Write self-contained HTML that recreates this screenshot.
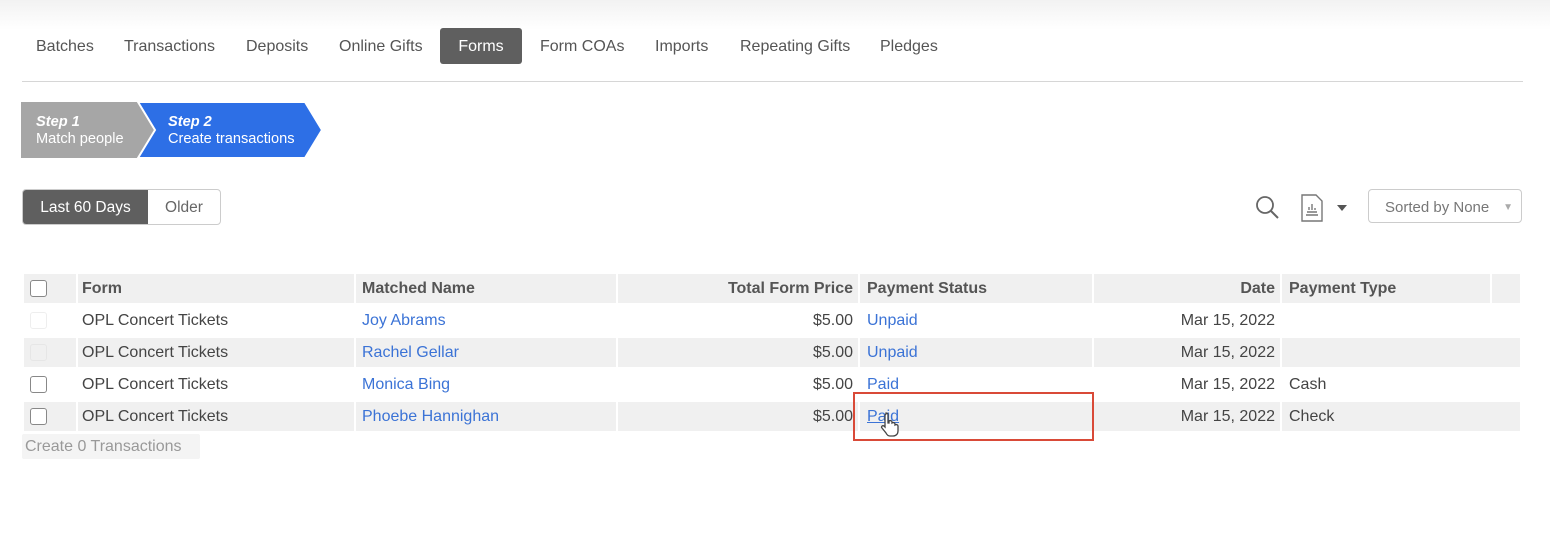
<!DOCTYPE html>
<html><head><style>
body{margin:0;width:1550px;height:540px;background:#fff;font-family:"Liberation Sans",sans-serif;color:#444;position:relative;overflow:hidden}
.top{position:absolute;left:0;top:0;width:1550px;height:30px;background:linear-gradient(#f2f2f2,#fff)}
.nav{position:absolute;top:28px;left:0;font-size:16px;color:#555}
.nav span{position:absolute;top:10px;white-space:nowrap}
.forms{position:absolute;left:440px;top:28px;width:82px;height:36px;background:#5f5f5f;border-radius:3px;color:#fff;font-size:16px;text-align:center;line-height:37px}
.hr{position:absolute;left:22px;top:81px;width:1501px;height:1px;background:#d6d6d6}
.step{position:absolute;color:#fff;font-size:14.6px;line-height:17px}
.abs{position:absolute}
.cell{position:absolute;background:#f0f0f0}
.t{position:absolute;font-size:16px;white-space:nowrap}
.b{font-weight:bold;color:#555}
.lk{color:#3b73d6}
.cb{position:absolute;width:15px;height:15px;border:1.5px solid #888;border-radius:3px;background:#fff}
</style></head><body>
<div class="top"></div>
<div class="nav">
<span style="left:36px">Batches</span><span style="left:124px">Transactions</span><span style="left:246px">Deposits</span><span style="left:339px">Online Gifts</span><span style="left:540px">Form COAs</span><span style="left:655px">Imports</span><span style="left:740px">Repeating Gifts</span><span style="left:880px">Pledges</span>
</div>
<div class="forms">Forms</div>
<div class="hr"></div>
<svg class="abs" style="left:21px;top:102px" width="305" height="57">
<polygon points="0,0 127,0 144,28 127,56 0,56" fill="#a6a6a6"/>
<polygon points="129,0 284,0 301,28 284,56 117,56 134,28 117,0" fill="#2d6fe6" stroke="#fff" stroke-width="2"/>
</svg>
<div class="step" style="left:36px;top:114px"><b><i>Step 1</i></b><br>Match people</div>
<div class="step" style="left:168px;top:114px"><b><i>Step 2</i></b><br>Create transactions</div>
<div class="abs" style="left:22px;top:189px;width:197px;height:34px;border:1px solid #ccc;border-radius:4px;overflow:hidden;font-size:15.5px">
<div class="abs" style="left:0;top:0;width:125px;height:34px;background:#5f5f5f;color:#fff;text-align:center;line-height:36px">Last 60 Days</div>
<div class="abs" style="left:125px;top:0;width:72px;height:34px;color:#666;text-align:center;line-height:36px">Older</div>
</div>
<svg class="abs" style="left:1255px;top:195px" width="26" height="26"><circle cx="10" cy="10" r="8" fill="none" stroke="#666" stroke-width="1.8"/><line x1="16" y1="16" x2="23" y2="23" stroke="#666" stroke-width="2"/></svg>
<svg class="abs" style="left:1300px;top:193px" width="50" height="30"><path d="M2 2h14l6 6v20h-20z" fill="none" stroke="#777" stroke-width="1.4"/><path d="M6 22h12M7 19h10M9 17v-3M12 17v-6M15 17v-2" stroke="#777" stroke-width="1.4"/><polygon points="37,12 47,12 42,18" fill="#555"/></svg>
<div class="abs" style="left:1368px;top:189px;width:154px;height:34px;border:1px solid #ccc;border-radius:4px;font-size:15px;color:#777;line-height:35px;padding-left:16px;box-sizing:border-box">Sorted by None<span style="position:absolute;right:8px;top:0;font-size:10px;color:#aaa">▼</span></div>

<div class="cell" style="left:24px;top:274px;width:52px;height:29px"></div>
<div class="cell" style="left:78px;top:274px;width:276px;height:29px"></div>
<div class="cell" style="left:356px;top:274px;width:260px;height:29px"></div>
<div class="cell" style="left:618px;top:274px;width:240px;height:29px"></div>
<div class="cell" style="left:860px;top:274px;width:232px;height:29px"></div>
<div class="cell" style="left:1094px;top:274px;width:186px;height:29px"></div>
<div class="cell" style="left:1282px;top:274px;width:208px;height:29px"></div>
<div class="cell" style="left:1492px;top:274px;width:28px;height:29px"></div>
<div class="cb" style="left:30px;top:280px"></div>
<div class="t b" style="left:82px;top:280px">Form</div>
<div class="t b" style="left:362px;top:280px">Matched Name</div>
<div class="t b" style="right:697px;top:280px">Total Form Price</div>
<div class="t b" style="left:867px;top:280px">Payment Status</div>
<div class="t b" style="right:275px;top:280px">Date</div>
<div class="t b" style="left:1289px;top:280px">Payment Type</div>

<div class="cell" style="left:24px;top:338px;width:52px;height:29px"></div><div class="cell" style="left:78px;top:338px;width:276px;height:29px"></div><div class="cell" style="left:356px;top:338px;width:260px;height:29px"></div><div class="cell" style="left:618px;top:338px;width:240px;height:29px"></div><div class="cell" style="left:860px;top:338px;width:232px;height:29px"></div><div class="cell" style="left:1094px;top:338px;width:186px;height:29px"></div><div class="cell" style="left:1282px;top:338px;width:238px;height:29px"></div>
<div class="cell" style="left:24px;top:402px;width:52px;height:29px"></div><div class="cell" style="left:78px;top:402px;width:276px;height:29px"></div><div class="cell" style="left:356px;top:402px;width:260px;height:29px"></div><div class="cell" style="left:618px;top:402px;width:240px;height:29px"></div><div class="cell" style="left:860px;top:402px;width:232px;height:29px"></div><div class="cell" style="left:1094px;top:402px;width:186px;height:29px"></div><div class="cell" style="left:1282px;top:402px;width:238px;height:29px"></div>

<div class="cb" style="left:30px;top:312px;border-color:#eee;background:transparent"></div>
<div class="cb" style="left:30px;top:344px;border-color:#e6e6e6;background:transparent"></div>
<div class="cb" style="left:30px;top:376px"></div>
<div class="cb" style="left:30px;top:408px"></div>

<div class="t" style="left:82px;top:312px">OPL Concert Tickets</div><div class="t lk" style="left:362px;top:312px">Joy Abrams</div><div class="t" style="right:697px;top:312px">$5.00</div><div class="t lk" style="left:867px;top:312px">Unpaid</div><div class="t" style="right:275px;top:312px">Mar 15, 2022</div>
<div class="t" style="left:82px;top:344px">OPL Concert Tickets</div><div class="t lk" style="left:362px;top:344px">Rachel Gellar</div><div class="t" style="right:697px;top:344px">$5.00</div><div class="t lk" style="left:867px;top:344px">Unpaid</div><div class="t" style="right:275px;top:344px">Mar 15, 2022</div>
<div class="t" style="left:82px;top:376px">OPL Concert Tickets</div><div class="t lk" style="left:362px;top:376px">Monica Bing</div><div class="t" style="right:697px;top:376px">$5.00</div><div class="t lk" style="left:867px;top:376px">Paid</div><div class="t" style="right:275px;top:376px">Mar 15, 2022</div><div class="t" style="left:1289px;top:376px">Cash</div>
<div class="t" style="left:82px;top:408px">OPL Concert Tickets</div><div class="t lk" style="left:362px;top:408px">Phoebe Hannighan</div><div class="t" style="right:697px;top:408px">$5.00</div><div class="t lk" style="left:867px;top:408px;text-decoration:underline">Paid</div><div class="t" style="right:275px;top:408px">Mar 15, 2022</div><div class="t" style="left:1289px;top:408px">Check</div>

<div class="abs" style="left:853px;top:392px;width:237px;height:45px;border:2px solid #d94a38"></div>
<svg class="abs" style="left:880px;top:411px" width="24" height="26"><path d="M6 2c1.5 0 2 1 2 2v8h1v-2c1.5-1 3 0 3 1v1c1.5-1 3 0 3 1v1c1.5-1 3 0 3 1v5c0 3-2 5-5 5h-3c-2 0-3-1-4-3l-4-5c-1-1 0-3 2-2l1 1v-11c0-1 .5-2 1-2z" fill="#fff" stroke="#444" stroke-width="1.3"/></svg>

<div class="abs" style="left:22px;top:434px;width:175px;height:25px;background:#f4f4f4;border-radius:2px;color:#999;font-size:16px;line-height:26px;padding-left:3px">Create 0 Transactions</div>
</body></html>
